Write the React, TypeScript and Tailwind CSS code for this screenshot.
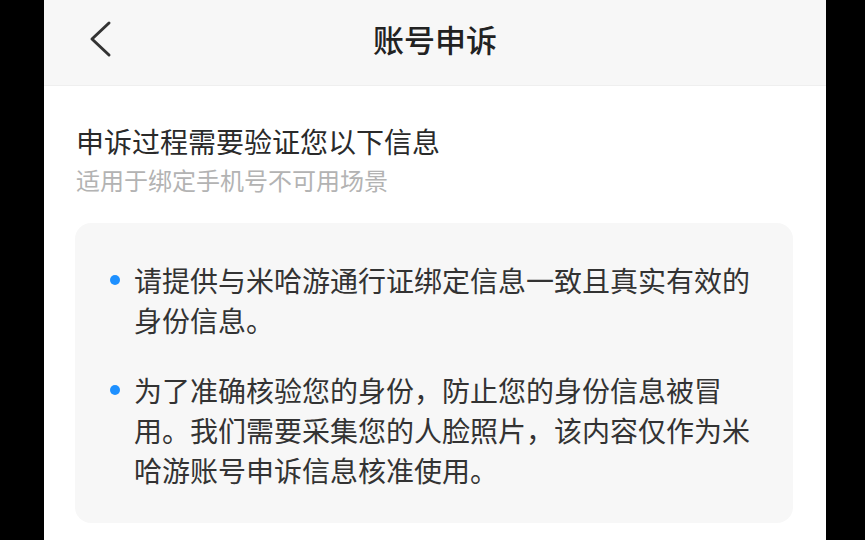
import React from 'react';

const font = { fontFamily: '"Noto Sans CJK SC", "Noto Sans", sans-serif' };

const tips = [
  '请提供与米哈游通行证绑定信息一致且真实有效的身份信息。',
  '为了准确核验您的身份，防止您的身份信息被冒用。我们需要采集您的人脸照片，该内容仅作为米哈游账号申诉信息核准使用。',
];

export default function App() {
  return (
    <div className="w-[865px] h-[540px] bg-black flex overflow-hidden" style={font}>
      <div className="ml-[44px] w-[782px] h-full bg-white flex flex-col">
        {/* header */}
        <div className="h-[86px] shrink-0 bg-[#f7f7f7] border-b border-[#efefef] flex items-center pb-[8px]">
          <div className="w-[100px] pl-[43px] flex items-center">
            <svg width="26" height="38" viewBox="0 0 26 38" fill="none">
              <path d="M22 3 L5 19 L22 35" stroke="#333" strokeWidth="3" strokeLinecap="round" strokeLinejoin="round" />
            </svg>
          </div>
          <div className="flex-1 text-center text-[31px] leading-[40px] font-medium text-[#222]">账号申诉</div>
          <div className="w-[100px]" />
        </div>

        {/* body */}
        <div className="px-[31px] pt-[40px]">
          <div className="pl-[1px] text-[28px] leading-[30px] text-[#2a2a2a]">申诉过程需要验证您以下信息</div>
          <div className="pl-[1px] mt-[11px] text-[24px] leading-[26px] text-[#b3b3b3]">适用于绑定手机号不可用场景</div>

          <div className="mt-[30px] w-[718px] rounded-[16px] bg-[#f7f7f7] pl-[35px] pr-[29px] pt-[37px] pb-[33px] flex flex-col gap-[30px]">
            {tips.map((t) => (
              <div key={t} className="flex items-start">
                <div className="w-[10px] h-[10px] mt-[15px] rounded-full bg-[#1e90ff] shrink-0" />
                <div className="ml-[14px] w-[630px] text-[28px] leading-[40px] text-[#333]">{t}</div>
              </div>
            ))}
          </div>
        </div>
      </div>
    </div>
  );
}
